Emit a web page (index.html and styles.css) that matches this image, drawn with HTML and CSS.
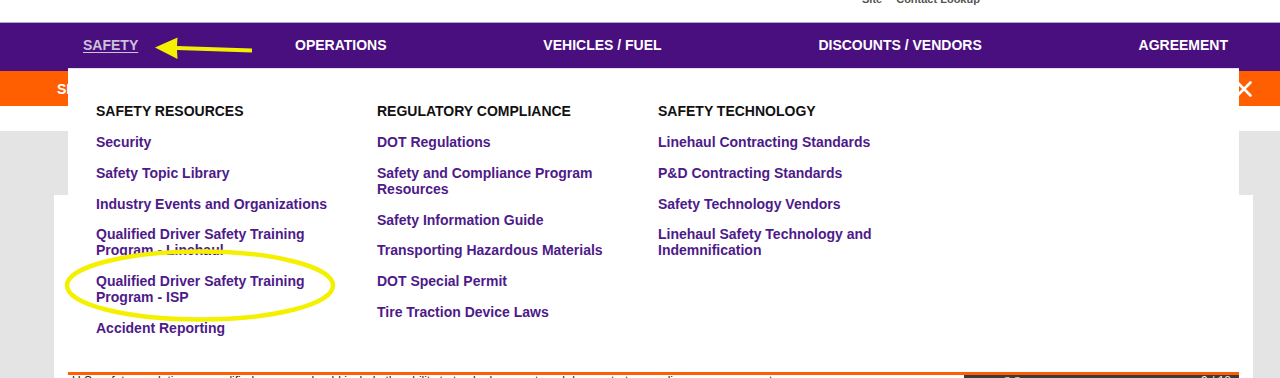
FILE: index.html
```html
<!DOCTYPE html>
<html lang="en">
<head>
<meta charset="utf-8">
<title>Safety</title>
<link rel="stylesheet" href="styles.css">
</head>
<body>
<div class="page">
  <div class="utility">
    <a class="util-link" href="#">Site</a>
    <a class="util-link" href="#">Contact Lookup</a>
  </div>
  <nav class="mainnav">
    <a class="nav-item active" href="#">SAFETY</a>
    <a class="nav-item" href="#">OPERATIONS</a>
    <a class="nav-item" href="#">VEHICLES / FUEL</a>
    <a class="nav-item" href="#">DISCOUNTS / VENDORS</a>
    <a class="nav-item" href="#">AGREEMENT</a>
  </nav>
  <div class="promo">
    <span class="promo-text">SIGN UP FOR SAFETY ALERTS</span>
    <span class="promo-close" aria-label="Close">
      <svg width="16" height="16" viewBox="0 0 16 16"><path d="M1.5 1.5 L14.5 14.5 M14.5 1.5 L1.5 14.5" stroke="#fff" stroke-width="2.6" stroke-linecap="round"/></svg>
    </span>
  </div>
  <div class="spacer"></div>
  <div class="content-area">
    <div class="card">
      <div class="card-inner">
        <div class="slide-rule"></div>
        <div class="slide-row">
          <span class="slide-text">U.S. safety regulations, a qualified program should include the ability to track, document, and demonstrate compliance upon request.</span>
          <span class="slide-bar"><span class="slide-ctrl">&#9646; &#9646; &#9632; &#9632; &#9632; &#9632;</span><span class="slide-count">9 / 18</span></span>
        </div>
      </div>
    </div>
  </div>

  <div class="dropdown">
    <div class="dd-col">
      <h3 class="dd-head">SAFETY RESOURCES</h3>
      <a class="dd-link" href="#">Security</a>
      <a class="dd-link" href="#">Safety Topic Library</a>
      <a class="dd-link" href="#">Industry Events and Organizations</a>
      <a class="dd-link" href="#">Qualified Driver Safety Training Program - Linehaul</a>
      <a class="dd-link" href="#">Qualified Driver Safety Training Program - ISP</a>
      <a class="dd-link" href="#">Accident Reporting</a>
    </div>
    <div class="dd-col">
      <h3 class="dd-head">REGULATORY COMPLIANCE</h3>
      <a class="dd-link" href="#">DOT Regulations</a>
      <a class="dd-link" href="#">Safety and Compliance Program Resources</a>
      <a class="dd-link" href="#">Safety Information Guide</a>
      <a class="dd-link" href="#">Transporting Hazardous Materials</a>
      <a class="dd-link" href="#">DOT Special Permit</a>
      <a class="dd-link" href="#">Tire Traction Device Laws</a>
    </div>
    <div class="dd-col">
      <h3 class="dd-head">SAFETY TECHNOLOGY</h3>
      <a class="dd-link" href="#">Linehaul Contracting Standards</a>
      <a class="dd-link" href="#">P&amp;D Contracting Standards</a>
      <a class="dd-link" href="#">Safety Technology Vendors</a>
      <a class="dd-link" href="#">Linehaul Safety Technology and Indemnification</a>
    </div>
  </div>

  <svg class="annotations" width="1280" height="378" viewBox="0 0 1280 378">
    <polygon points="155,47.5 177.5,37.5 177,46 252,48.5 252,52.5 177,50 177.5,59" fill="#f4f000"/>
    <ellipse cx="200" cy="285.5" rx="133" ry="34" fill="none" stroke="#f4f000" stroke-width="4.5"/>
  </svg>
</div>
</body>
</html>
```

FILE: styles.css
```css
* { box-sizing: border-box; }
html, body { margin: 0; padding: 0; }
body {
  background: #ffffff;
  font-family: "Liberation Sans", Arial, Helvetica, sans-serif;
  width: 1280px;
  height: 378px;
  overflow: hidden;
}
a { text-decoration: none; }

.page {
  position: relative;
  width: 1280px;
  height: 378px;
  overflow: hidden;
}

.utility {
  height: 22px;
  display: flex;
  gap: 14px;
  padding-left: 862px;
}
.util-link {
  font-size: 11px;
  font-weight: bold;
  line-height: 11px;
  margin-top: -6px;
  color: #555555;
}

.mainnav {
  height: 49px;
  border-top: 1px solid #b7a6d3;
  background: #4a0f7e;
  display: flex;
  justify-content: space-between;
  padding: 14px 52px 0 83px;
}
.nav-item {
  font-size: 14px;
  font-weight: bold;
  line-height: 16px;
  height: 16px;
  color: #ffffff;
}
.nav-item.active {
  color: #cbc3da;
  text-decoration: underline;
  text-underline-offset: 2px;
}

.promo {
  height: 35px;
  background: #ff5f00;
  display: flex;
  align-items: center;
  justify-content: space-between;
  padding: 0 28px 0 57px;
}
.promo-text {
  color: #ffffff;
  font-size: 14px;
  font-weight: bold;
}
.promo-close {
  display: flex;
  width: 16px;
  height: 16px;
}

.spacer { height: 25px; }

.content-area {
  background: #e4e4e4;
  padding: 64px 27px 0 54px;
  height: 247px;
}
.card {
  background: #ffffff;
  height: 200px;
  padding: 177px 14px 0 14px;
}
.slide-rule {
  height: 3px;
  background: #ff5f00;
}
.slide-row {
  display: flex;
  height: 20px;
  background: #ffffff;
}
.slide-text {
  flex: 1;
  font-size: 12px;
  line-height: 12px;
  padding: 0 0 0 4px;
  color: #222222;
  white-space: nowrap;
  overflow: hidden;
}
.slide-bar {
  width: 275px;
  background: #3a3a3a;
  color: #dddddd;
  font-size: 12px;
  line-height: 12px;
  padding: 0 8px 0 40px;
  display: flex;
  justify-content: space-between;
  white-space: nowrap;
}
.slide-count { color: #eeeeee; }

.dropdown {
  position: absolute;
  left: 68px;
  top: 68px;
  width: 1171px;
  height: 304px;
  background: #ffffff;
  border-top: 1px solid #e6e0ee;
  padding: 34px 0 0 28px;
  display: grid;
  grid-template-columns: 250px 250px 250px;
  column-gap: 31px;
  align-content: start;
  align-items: start;
}
.dd-col {
  display: flex;
  flex-direction: column;
  gap: 14.75px;
}
.dd-head {
  margin: 0 0 0.25px 0;
  font-size: 14px;
  font-weight: bold;
  line-height: 16px;
  color: #111111;
}
.dd-link {
  font-size: 14px;
  font-weight: bold;
  line-height: 16px;
  color: #4e1a8a;
}

.annotations {
  position: absolute;
  left: 0;
  top: 0;
  pointer-events: none;
}
```
